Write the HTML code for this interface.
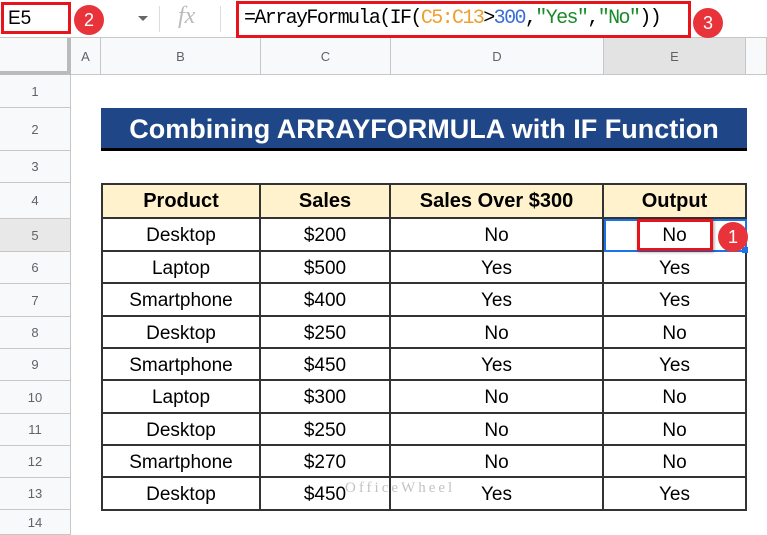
<!DOCTYPE html>
<html><head><meta charset="utf-8"><style>
*{margin:0;padding:0;box-sizing:border-box}
body{width:767px;height:529px;overflow:hidden;background:#fff;font-family:"Liberation Sans",Arial,sans-serif;position:relative}
.a{position:absolute}
.rh{position:absolute;left:0;width:71px;background:#f8f9fa;border-bottom:1px solid #c7c7c7;border-right:1px solid #c7c7c7;color:#5f6368;font-size:13px;display:flex;align-items:center;justify-content:center}
.ch{position:absolute;top:38px;height:37px;background:#f8f9fa;border-right:1px solid #c7c7c7;border-bottom:1px solid #c7c7c7;color:#5f6368;font-size:13px;display:flex;align-items:center;justify-content:center}
.c{position:absolute;display:flex;align-items:center;justify-content:center;font-size:19px;color:#000;border-right:2px solid #333;border-bottom:2px solid #333;padding-top:3px}
.h{font-weight:bold;background:#fff2cc;font-size:20px;padding-top:1px}
.badge{position:absolute;width:30px;height:30px;border-radius:50%;background:#e8333a;color:#fff;font-size:18px;display:flex;align-items:center;justify-content:center}
</style></head><body>
<div class="a" style="left:0;top:0;width:767px;height:38px;border-bottom:1px solid #c7c7c7;background:#fff"></div>
<div class="a" style="left:1px;top:2px;width:70px;height:32px;border:3px solid #e8141c"></div>
<div class="a" style="left:8px;top:8px;font-size:19px;color:#000">E5</div>
<div class="badge" style="left:74px;top:5px">2</div>
<div class="a" style="left:138px;top:16px;width:0;height:0;border-left:5px solid transparent;border-right:5px solid transparent;border-top:5px solid #666"></div>
<div class="a" style="left:159px;top:6px;width:1px;height:26px;background:#ddd"></div>
<div class="a" style="left:178px;top:3px;font-family:'Liberation Serif',serif;font-style:italic;font-size:24px;color:#bbb">fx</div>
<div class="a" style="left:220px;top:6px;width:1px;height:26px;background:#ddd"></div>
<div class="a" style="left:236px;top:1px;width:455px;height:37px;border:3px solid #e8141c"></div>
<div class="a" style="left:244px;top:7px;font-family:'Liberation Mono',monospace;font-size:20px;color:#000;letter-spacing:-1.6px;white-space:nowrap">=ArrayFormula(IF(<span style="color:#f0a030">C5:C13</span>&gt;<span style="color:#3b6fd8">300</span>,<span style="color:#1a8a2a">"Yes"</span>,<span style="color:#1a8a2a">"No"</span>))</div>
<div class="badge" style="left:693px;top:8px">3</div>
<div class="ch" style="left:0;width:71px;border-right:4px solid #bbb;border-bottom:4px solid #bbb"></div>
<div class="ch" style="left:71px;width:30px">A</div>
<div class="ch" style="left:101px;width:160px">B</div>
<div class="ch" style="left:261px;width:130px">C</div>
<div class="ch" style="left:391px;width:213px">D</div>
<div class="ch" style="left:604px;width:142px;background:#e3e3e3">E</div>
<div class="ch" style="left:746px;width:21px"></div>
<div class="rh" style="top:75px;height:33px">1</div>
<div class="rh" style="top:108px;height:43px">2</div>
<div class="rh" style="top:151px;height:32px">3</div>
<div class="rh" style="top:183px;height:36px">4</div>
<div class="rh" style="top:219px;height:33px;background:#e8e8e8">5</div>
<div class="rh" style="top:252px;height:32px">6</div>
<div class="rh" style="top:284px;height:33px">7</div>
<div class="rh" style="top:317px;height:32px">8</div>
<div class="rh" style="top:349px;height:32px">9</div>
<div class="rh" style="top:381px;height:33px">10</div>
<div class="rh" style="top:414px;height:32px">11</div>
<div class="rh" style="top:446px;height:32px">12</div>
<div class="rh" style="top:478px;height:32px">13</div>
<div class="rh" style="top:510px;height:25px">14</div>
<div class="a" style="left:101px;top:108px;width:646px;height:43px;background:#1f4788;border-bottom:3px solid #000;color:#fff;font-weight:bold;font-size:27px;padding-top:2px;display:flex;align-items:center;justify-content:center">Combining ARRAYFORMULA with IF Function</div>
<div class="a" style="left:101px;top:183px;width:646px;height:328px;border-left:2px solid #333;border-top:2px solid #333"></div>
<div id="t"></div>
<script>
var cols=[[101,261],[261,391],[391,604],[604,747]];
var rows=[183,219,252,284,317,349,381,414,446,478,511];
var data=[["Product","Sales","Sales Over $300","Output"],["Desktop","$200","No","No"],["Laptop","$500","Yes","Yes"],["Smartphone","$400","Yes","Yes"],["Desktop","$250","No","No"],["Smartphone","$450","Yes","Yes"],["Laptop","$300","No","No"],["Desktop","$250","No","No"],["Smartphone","$270","No","No"],["Desktop","$450","Yes","Yes"]];
var h="";
for(var r=0;r<10;r++)for(var c=0;c<4;c++){
var x=cols[c][0]+(c==0?2:0),w=cols[c][1]-x,y=rows[r]+(r==0?2:0),hh=rows[r+1]-y;
h+='<div class="c'+(r==0?' h':'')+'" style="left:'+x+'px;top:'+y+'px;width:'+w+'px;height:'+hh+'px">'+data[r][c]+'</div>';}
document.getElementById("t").innerHTML=h;
</script>
<div class="a" style="left:604px;top:219px;width:143px;height:33px;border:2px solid #1a73e8"></div>
<div class="a" style="left:742px;top:247px;width:6px;height:6px;background:#1a73e8"></div>
<div class="a" style="left:637px;top:219px;width:76px;height:32px;border:3px solid #e8141c;box-shadow:1px 1px 3px rgba(0,0,0,.4)"></div>
<div class="badge" style="left:718px;top:222px">1</div>
<div class="a" style="left:345px;top:480px;font-family:'Liberation Serif',serif;font-size:15px;letter-spacing:3px;color:rgba(120,120,120,.45)">OfficeWheel</div>
</body></html>
